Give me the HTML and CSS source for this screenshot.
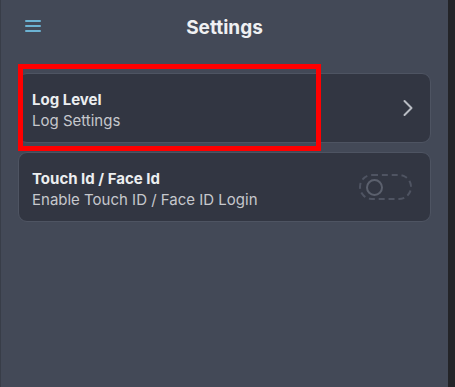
FILE: index.html
```html
<!DOCTYPE html>
<html>
<head>
<meta charset="utf-8">
<link rel="stylesheet" href="styles.css">
</head>
<body>
<div class="screen">
  <div class="app">
    <header class="topbar">
      <div class="menu">
        <span></span><span></span><span></span>
      </div>
      <h1 class="title">Settings</h1>
      <div></div>
    </header>
    <div class="list">
      <div class="card">
        <div class="text">
          <div class="card-title">Log Level</div>
          <div class="card-sub">Log Settings</div>
        </div>
        <svg class="chev" width="12" height="18" viewBox="0 0 12 18"><path d="M2.5 2 L9.5 9 L2.5 16" fill="none" stroke="#b9bcc3" stroke-width="2" stroke-linecap="round" stroke-linejoin="round"/></svg>
        <div class="highlight"></div>
      </div>
      <div class="card">
        <div class="text">
          <div class="card-title">Touch Id / Face Id</div>
          <div class="card-sub">Enable Touch ID / Face ID Login</div>
        </div>
        <div class="toggle"><div class="knob"></div></div>
      </div>
    </div>
  </div>
  <div class="scrollbar"></div>
</div>
</body>
</html>
```
FILE: styles.css
```css
html, body {
  margin: 0;
  padding: 0;
  background: #424855;
}
body {
  font-family: Inter, "Noto Sans", sans-serif;
  width: 455px;
  height: 387px;
  overflow: hidden;
}
.screen {
  display: flex;
  height: 387px;
}
.app {
  width: 447px;
  border-left: 1px solid #383d48;
  background: #434957;
}
.scrollbar {
  width: 7px;
  background: #232428;
}
.topbar {
  height: 73px;
  box-sizing: border-box;
  display: grid;
  grid-template-columns: 1fr auto 1fr;
  align-items: start;
  padding: 0 24px;
}
.menu {
  margin-top: 20px;
  width: 16px;
  display: flex;
  flex-direction: column;
  gap: 3px;
}
.menu span {
  display: block;
  height: 2px;
  background: #6cb3d3;
  border-radius: 1px;
}
.title {
  margin: 15px 0 0 0;
  font-size: 19px;
  line-height: 25px;
  font-weight: 700;
  color: #eff0f2;
}
.list {
  padding: 0 17px 0 17px;
  display: flex;
  flex-direction: column;
  gap: 9px;
}
.card {
  position: relative;
  height: 70px;
  box-sizing: border-box;
  border: 1px solid #4e5462;
  background: #323642;
  border-radius: 9px;
  display: flex;
  align-items: center;
  justify-content: space-between;
  padding: 0 18px 0 13px;
}
.text {
  display: flex;
  flex-direction: column;
  padding-top: 4px;
}
.card-title {
  font-size: 15px;
  line-height: 21px;
  font-weight: 700;
  color: #eceef0;
}
.card-sub {
  font-size: 15px;
  line-height: 21px;
  color: #c6c8cd;
}
.chev {
  margin-right: -2px;
}
.toggle {
  box-sizing: border-box;
  width: 53px;
  height: 26px;
  border: 2px dashed #4f5462;
  border-radius: 14px;
  display: flex;
  align-items: center;
  padding-left: 5px;
}
.knob {
  box-sizing: border-box;
  width: 17px;
  height: 17px;
  border: 2px solid #5b606d;
  border-radius: 50%;
}
.highlight {
  position: absolute;
  left: -1px;
  top: -10px;
  width: 303px;
  height: 87px;
  box-sizing: border-box;
  border: 5px solid #ff0000;
  pointer-events: none;
}
```
